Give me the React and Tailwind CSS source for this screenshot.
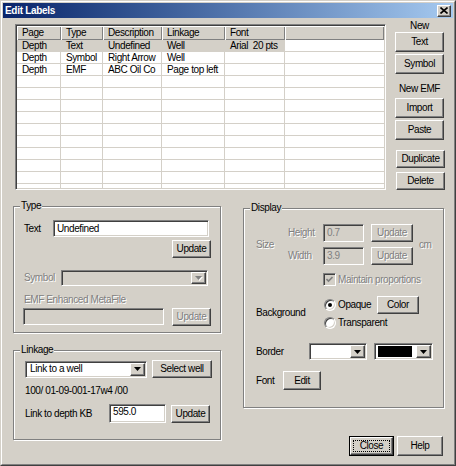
import React from "react";

const raised =
  "bg-[#d4d0c8] border border-t-white border-l-white border-b-[#404040] border-r-[#404040] shadow-[inset_-1px_-1px_0_#808080]";
const sunken =
  "border border-t-[#808080] border-l-[#808080] border-b-white border-r-white shadow-[inset_1px_1px_0_#404040,inset_-1px_-1px_0_#d4d0c8]";
const dis = "text-[#808080] [text-shadow:1px_1px_0_#fff]";

function Btn({ children, className = "", disabled }) {
  return (
    <div className={`${raised} flex items-center justify-center shrink-0 ${disabled ? dis : "text-black"} ${className}`}>
      {children}
    </div>
  );
}

function Arrow({ disabled }) {
  return (
    <svg width="7" height="4" viewBox="0 0 7 4" className={disabled ? "drop-shadow-[1px_1px_0_#fff]" : ""}>
      <polygon points="0,0 7,0 3.5,4" fill={disabled ? "#808080" : "#000"} />
    </svg>
  );
}

function Combo({ className = "", children, disabled, white = true }) {
  return (
    <div className={`${sunken} ${white ? "bg-white" : "bg-[#d4d0c8]"} flex items-stretch p-[1px] shrink-0 ${className}`}>
      <div className="flex-1 flex items-center pl-[3px] overflow-hidden">{children}</div>
      <div className={`${raised} w-[15px] flex items-center justify-center`}>
        <Arrow disabled={disabled} />
      </div>
    </div>
  );
}

function Field({ className = "", children, disabled }) {
  return (
    <div
      className={`${sunken} ${disabled ? "bg-[#d4d0c8] text-[#808080]" : "bg-white text-black"} shrink-0 flex items-center pl-[3px] ${className}`}
    >
      {children}
    </div>
  );
}

function Group({ label, className = "", children }) {
  return (
    <div className={`relative border border-[#808080] shadow-[inset_1px_1px_0_#fff,1px_1px_0_#fff] ${className}`}>
      <span className="absolute -top-[7px] left-[6px] bg-[#d4d0c8] px-px leading-[12px]">{label}</span>
      {children}
    </div>
  );
}

function Radio({ checked }) {
  return (
    <div className="w-[12px] h-[12px] rounded-full bg-white border border-t-[#808080] border-l-[#808080] border-b-white border-r-white shadow-[inset_1px_1px_0_#404040,inset_-1px_-1px_0_#d4d0c8] flex items-center justify-center shrink-0">
      {checked && <div className="w-[4px] h-[4px] rounded-full bg-black" />}
    </div>
  );
}

const cols = ["w-[44px]", "w-[42px]", "w-[59px]", "w-[63px]", "w-[60px]"];
const heads = ["Page", "Type", "Description", "Linkage", "Font"];
const rows = [
  ["Depth", "Text", "Undefined", "Well", "Arial  20 pts"],
  ["Depth", "Symbol", "Right Arrow", "Well", ""],
  ["Depth", "EMF", "ABC Oil Co", "Page top left", ""],
  ...Array.from({ length: 10 }, () => ["", "", "", "", ""]),
];

export default function App() {
  return (
    <div className="w-[456px] h-[466px] bg-[#d4d0c8] border border-t-[#d4d0c8] border-l-[#d4d0c8] border-b-[#404040] border-r-[#404040] font-['Liberation_Sans',Arial,sans-serif] text-[10px] tracking-[-0.4px] leading-[12px] text-black overflow-hidden">
      <div className="h-full border border-t-white border-l-white border-b-[#808080] border-r-[#808080] p-[1px]">
        {/* title bar */}
        <div className="h-[15px] flex items-center bg-gradient-to-r from-[#0a246a] to-[#a6caf0] pl-[2px] pr-[2px]">
          <span className="text-white font-bold tracking-[-0.3px] whitespace-pre">Edit Labels</span>
          <div className={`${raised} ml-auto w-[14px] h-[12px] flex items-center justify-center`}>
            <svg width="8" height="7" viewBox="0 0 8 7">
              <path d="M0.5 0.5 L7.5 6.5 M7.5 0.5 L0.5 6.5" stroke="#000" strokeWidth="1.6" />
            </svg>
          </div>
        </div>

        {/* top: list + buttons */}
        <div className="mt-[2px] flex">
          <div className={`ml-[12px] mt-[4px] w-[371px] h-[166px] ${sunken} bg-white p-[1px] overflow-hidden`}>
            <div className="flex h-[14px]">
              {heads.map((h, i) => (
                <div
                  key={h}
                  className={`${cols[i]} shrink-0 bg-[#d4d0c8] shadow-[inset_1px_1px_0_#fff,inset_-1px_-1px_0_#808080] pl-[5px] leading-[14px] whitespace-pre`}
                >
                  {h}
                </div>
              ))}
              <div className="flex-1 bg-[#d4d0c8] shadow-[inset_1px_1px_0_#fff,inset_-1px_-1px_0_#808080]" />
            </div>
            {rows.map((r, ri) => (
              <div key={ri} className="flex h-[12px]">
                {r.map((c, ci) => (
                  <div
                    key={ci}
                    className={`${cols[ci]} shrink-0 border-r border-b border-[#d4d0c8] pl-[5px] leading-[11px] whitespace-pre ${ri === 0 ? "bg-[#d4d0c8]" : ""}`}
                  >
                    {c}
                  </div>
                ))}
                <div className="flex-1 border-b border-[#d4d0c8]" />
              </div>
            ))}
          </div>

          <div className="ml-[9px] w-[50px] flex flex-col">
            <div className="h-[12px] w-[49px] text-center">New</div>
            <Btn className="h-[20px] w-[49px]">Text</Btn>
            <Btn className="mt-[2px] h-[20px] w-[49px]">Symbol</Btn>
            <div className="mt-[9px] h-[12px] w-[49px] text-center whitespace-nowrap">New EMF</div>
            <Btn className="mt-[3px] h-[20px] w-[49px]">Import</Btn>
            <Btn className="mt-[2px] h-[20px] w-[49px]">Paste</Btn>
            <Btn className="mt-[10px] ml-[1px] h-[18px] w-[49px]">Duplicate</Btn>
            <Btn className="mt-[4px] ml-[1px] h-[18px] w-[49px]">Delete</Btn>
          </div>
        </div>

        {/* lower */}
        <div className="mt-[16px] flex">
          <div className="ml-[10px] w-[208px] flex flex-col">
            <Group label="Type" className="h-[127px] pt-[13px] pl-[10px]">
              <div className="flex items-center h-[17px]">
                <span className="w-[29px]">Text</span>
                <Field className="w-[156px] h-[17px]">Undefined</Field>
              </div>
              <Btn className="mt-[3px] ml-[148px] w-[39px] h-[18px]">Update</Btn>
              <div className="mt-[12px] flex items-center h-[16px]">
                <span className={`w-[37px] ${dis}`}>Symbol</span>
                <Combo className="w-[147px] h-[16px]" disabled white={false} />
              </div>
              <div className={`mt-[8px] ${dis}`}>EMF Enhanced MetaFile</div>
              <div className="mt-[2px] -ml-[1px] flex items-start">
                <Field className="w-[141px] h-[17px]" disabled />
                <Btn className="ml-[8px] w-[39px] h-[18px]" disabled>
                  Update
                </Btn>
              </div>
            </Group>

            <Group label="Linkage" className="mt-[17px] h-[90px] pt-[9px] pl-[11px]">
              <div className="flex items-center h-[18px]">
                <Combo className="w-[122px] h-[17px]">Link to a well</Combo>
                <Btn className="ml-[5px] w-[60px] h-[18px]">Select well</Btn>
              </div>
              <div className="mt-[7px] whitespace-pre">100/ 01-09-001-17w4 /00</div>
              <div className="mt-[7px] flex items-center h-[19px]">
                <span className="w-[84px]">Link to depth KB</span>
                <Field className="w-[57px] h-[19px] !items-start pt-[1px]">595.0</Field>
                <Btn className="ml-[5px] w-[39px] h-[18px]">Update</Btn>
              </div>
            </Group>
          </div>

          <div className="ml-[22px] mt-[2px] w-[201px] flex flex-col">
            <Group label="Display" className="h-[200px] pt-[15px] pl-[12px]">
              <div className="flex">
                <span className={`w-[32px] self-center ${dis}`}>Size</span>
                <div className="flex flex-col">
                  <div className="flex items-center h-[18px]">
                    <span className={`w-[35px] ${dis}`}>Height</span>
                    <Field className="w-[41px] h-[18px]" disabled>
                      0.7
                    </Field>
                    <Btn className="ml-[7px] w-[42px] h-[18px]" disabled>
                      Update
                    </Btn>
                  </div>
                  <div className="mt-[5px] flex items-center h-[18px]">
                    <span className={`w-[35px] ${dis}`}>Width</span>
                    <Field className="w-[41px] h-[18px]" disabled>
                      3.9
                    </Field>
                    <Btn className="ml-[7px] w-[42px] h-[18px]" disabled>
                      Update
                    </Btn>
                  </div>
                </div>
                <span className={`ml-[6px] self-center ${dis}`}>cm</span>
              </div>

              <div className="mt-[8px] ml-[67px] flex items-center h-[13px]">
                <div className={`${sunken} bg-[#d4d0c8] w-[13px] h-[13px] flex items-center justify-center shrink-0`}>
                  <svg width="7" height="7" viewBox="0 0 7 7">
                    <path d="M0.5 3 L2.5 5 L6.5 1" stroke="#808080" strokeWidth="1.6" fill="none" />
                  </svg>
                </div>
                <span className={`ml-[2px] whitespace-nowrap ${dis}`}>Maintain proportions</span>
              </div>

              <div className="mt-[10px] flex">
                <span className="w-[68px] self-center">Background</span>
                <div className="flex flex-col">
                  <div className="flex items-center h-[18px]">
                    <Radio checked />
                    <span className="ml-[2px] w-[39px]">Opaque</span>
                    <Btn className="w-[42px] h-[18px]">Color</Btn>
                  </div>
                  <div className="mt-[2px] flex items-center h-[14px]">
                    <Radio />
                    <span className="ml-[2px]">Transparent</span>
                  </div>
                </div>
              </div>

              <div className="mt-[13px] flex items-center h-[17px]">
                <span className="w-[53px]">Border</span>
                <Combo className="w-[58px] h-[17px]" />
                <Combo className="ml-[7px] w-[59px] h-[17px]">
                  <div className="w-[34px] h-[11px] bg-black -ml-[1px]" />
                </Combo>
              </div>

              <div className="mt-[11px] flex items-center h-[19px]">
                <span className="w-[27px]">Font</span>
                <Btn className="w-[38px] h-[19px]">Edit</Btn>
              </div>
            </Group>

            <div className="mt-[28px] ml-[106px] flex">
              <div className="w-[45px] h-[20px] border border-black shrink-0">
                <div className={`${raised} h-full flex items-center justify-center p-[2px]`}>
                  <div className="w-full h-full border border-dotted border-black flex items-center justify-center">
                    Close
                  </div>
                </div>
              </div>
              <Btn className="ml-[3px] w-[46px] h-[20px]">Help</Btn>
            </div>
          </div>
        </div>
      </div>
    </div>
  );
}
